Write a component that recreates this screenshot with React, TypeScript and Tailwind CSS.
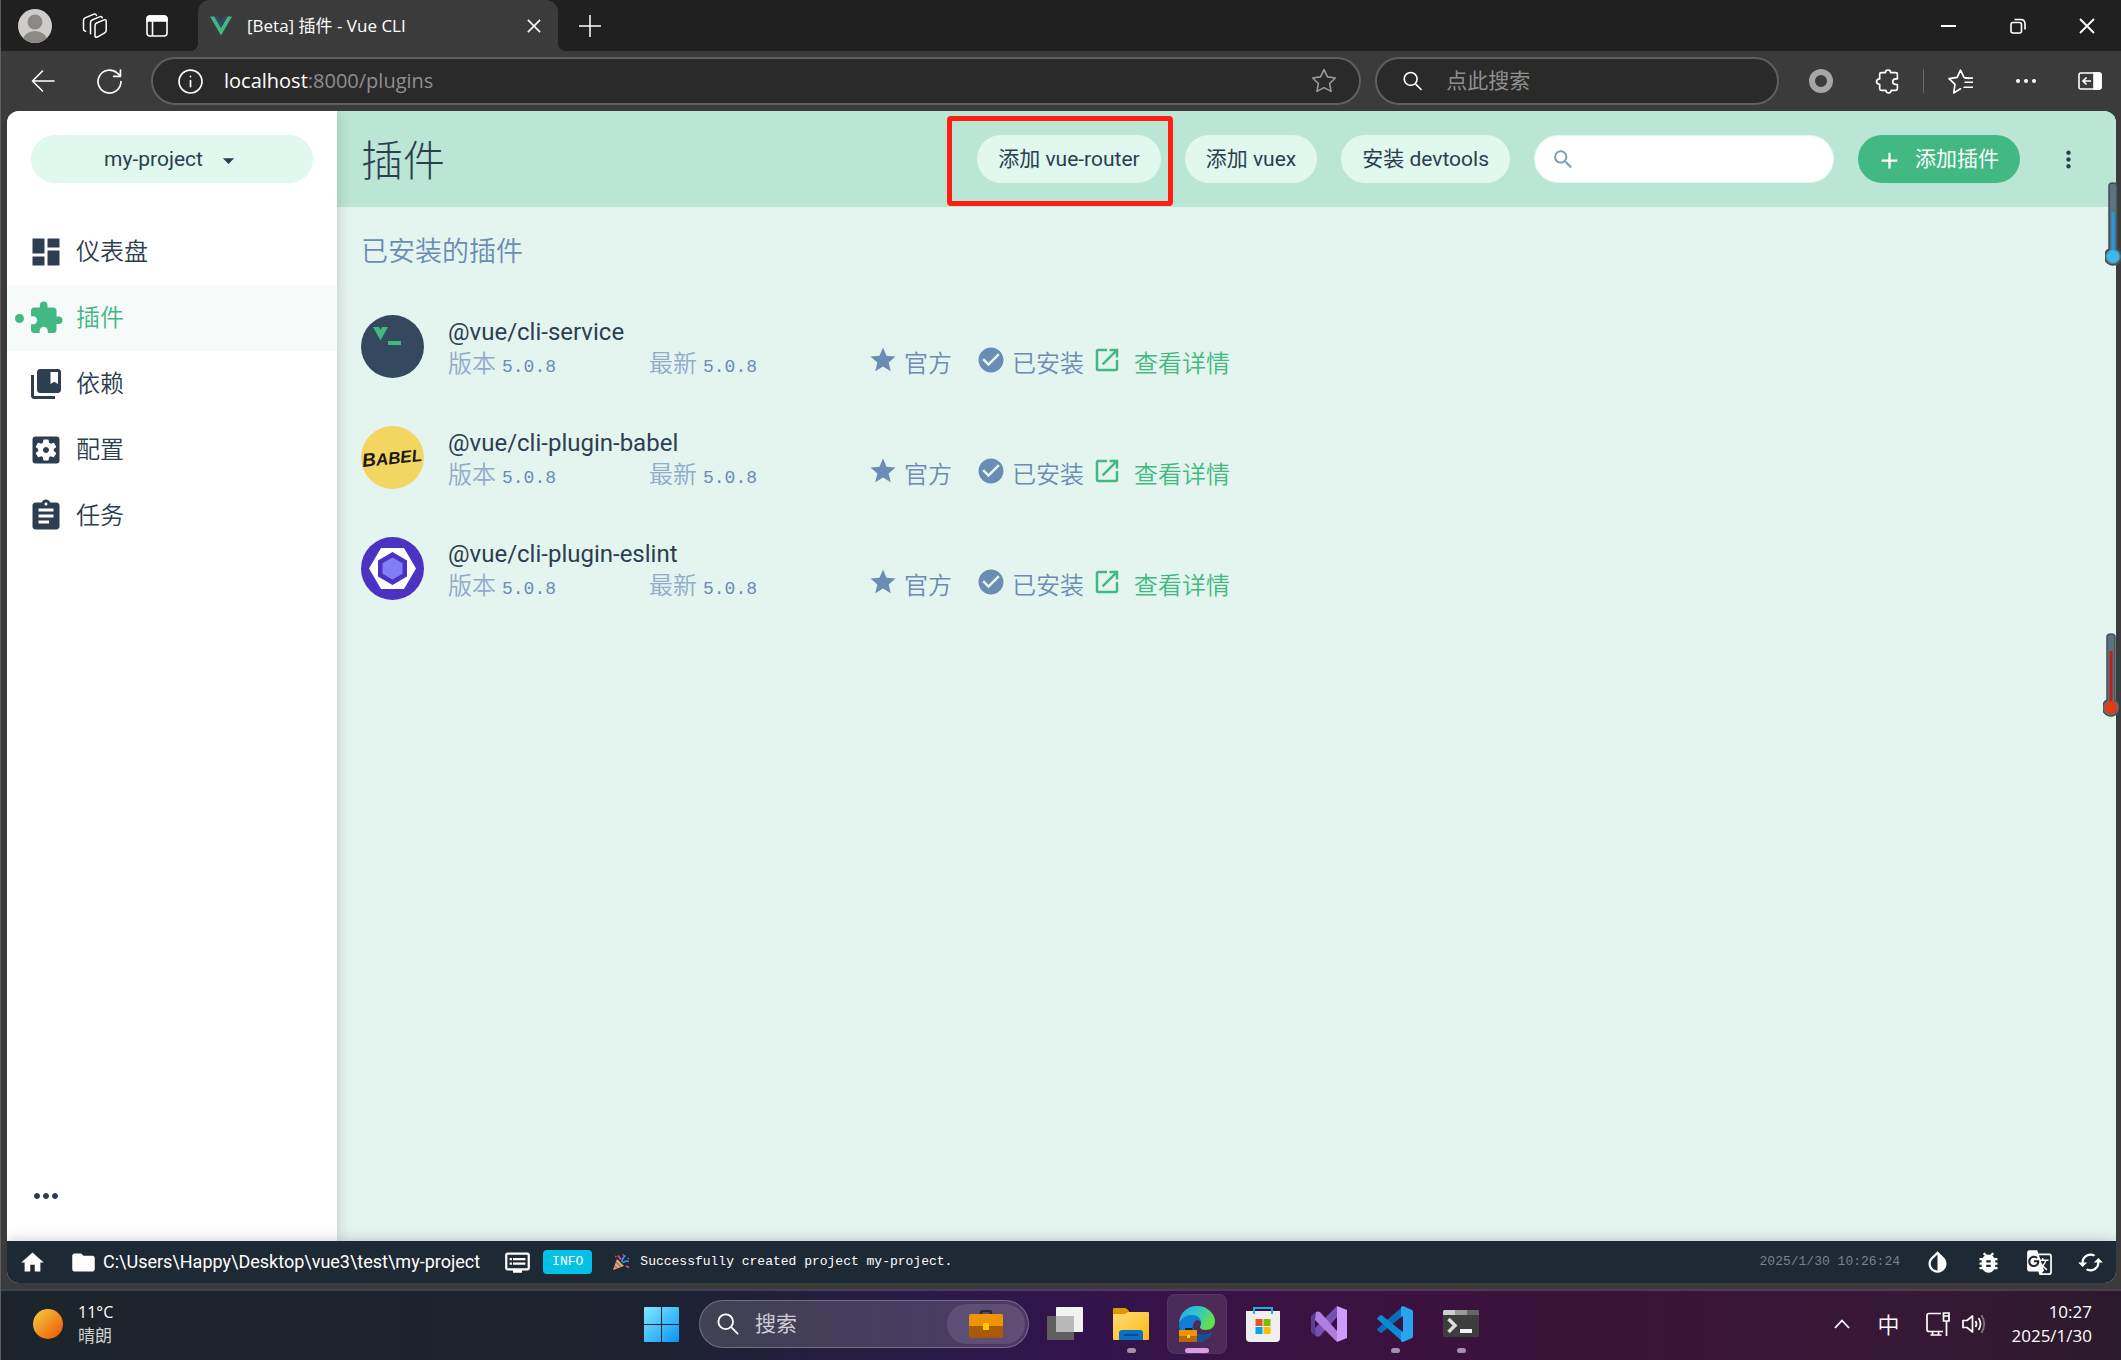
import type { ReactNode } from "react";
import {
  MdAdd,
  MdArrowDropDown,
  MdAssignment,
  MdBugReport,
  MdCached,
  MdCheckCircle,
  MdCollectionsBookmark,
  MdDashboard,
  MdDvr,
  MdExtension,
  MdFolder,
  MdGTranslate,
  MdHome,
  MdInvertColors,
  MdMoreHoriz,
  MdMoreVert,
  MdOpenInNew,
  MdSearch,
  MdSettingsApplications,
  MdStar,
} from "react-icons/md";

const navItems = [
  { label: "仪表盘", icon: MdDashboard, active: false },
  { label: "插件", icon: MdExtension, active: true },
  { label: "依赖", icon: MdCollectionsBookmark, active: false },
  { label: "配置", icon: MdSettingsApplications, active: false },
  { label: "任务", icon: MdAssignment, active: false },
];

const plugins = [
  { name: "@vue/cli-service", version: "5.0.8", latest: "5.0.8", logo: <CliLogo /> },
  { name: "@vue/cli-plugin-babel", version: "5.0.8", latest: "5.0.8", logo: <BabelLogo /> },
  { name: "@vue/cli-plugin-eslint", version: "5.0.8", latest: "5.0.8", logo: <EslintLogo /> },
];

function CliLogo() {
  return (
    <svg viewBox="0 0 63 63" className="size-[63px] shrink-0">
      <circle cx="31.5" cy="31.5" r="31.5" fill="#35495e" />
      <path d="M12 12h6l1.500 3 1.500-3h6l-7.500 13.500z" fill="#41b883" />
      <path d="M27 26h13v4H27z" fill="#41b883" />
    </svg>
  );
}

function BabelLogo() {
  return (
    <svg viewBox="0 0 63 63" className="size-[63px] shrink-0">
      <circle cx="31.5" cy="31.500" r="31.5" fill="#f3d662" />
      <text
        x="31"
        y="38"
        textAnchor="middle"
        transform="rotate(-6 31 32)"
        className="fill-[#1b1a14] font-['Liberation_Sans',sans-serif] text-[19px] font-bold italic"
      >
        B<tspan fontSize="17">ABEL</tspan>
      </text>
    </svg>
  );
}

function EslintLogo() {
  return (
    <svg viewBox="0 0 63 63" className="size-[63px] shrink-0">
      <circle cx="31.5" cy="31.5" r="31.5" fill="#4b32c3" />
      <path d="M20 11h23l12 20.500L43 52H20L8 31.500z" fill="#fff" />
      <path d="M31.500 15l14.500 8.500v16L31.500 48 17 39.500v-16z" fill="#4b32c3" />
      <path d="M31.500 20.500l10 5.800v10.400l-10 5.800-10-5.800V26.300z" fill="#8080f2" />
    </svg>
  );
}

function VueLogo() {
  return (
    <svg viewBox="0 0 24 21" className="h-5 w-[22px]">
      <path d="M0 0h4.800L12 12.500 19.200 0H24L12 20.800z" fill="#41b883" />
      <path d="M4.800 0h4.400L12 4.900 14.800 0h4.400L12 12.500z" fill="#35495e" />
    </svg>
  );
}

function CloseIcon({ size = 16 }: { size?: number }) {
  return (
    <svg viewBox="0 0 16 16" width={size} height={size} fill="none" stroke="currentColor" strokeWidth="1.8">
      <path d="M1 1l14 14M15 1L1 15" />
    </svg>
  );
}

function SearchGlyph({ className }: { className: string }) {
  return (
    <svg viewBox="0 0 24 24" className={className} fill="none" stroke="currentColor" strokeWidth="2">
      <circle cx="9.500" cy="9.500" r="8" />
      <path d="M15.500 15.500l7 7" strokeLinecap="round" />
    </svg>
  );
}

function BriefcaseIcon({ className }: { className: string }) {
  return (
    <svg viewBox="0 0 34 28" className={className}>
      <path d="M12 5V3q0-2 2-2h6q2 0 2 2v2" fill="none" stroke="#2a2a2a" strokeWidth="2.500" />
      <rect y="4" width="34" height="24" rx="1.500" fill="#a85a06" />
      <path d="M0 5.500Q0 4 1.500 4h31Q34 4 34 5.500V16H0z" fill="#ee9208" />
      <rect x="14" y="13" width="6" height="7" fill="#ffc90a" />
    </svg>
  );
}

function TitleBar() {
  return (
    <div className="flex h-[51px] items-stretch bg-[#202020] pl-1 text-white">
      <button aria-label="个人资料" className="flex w-[60px] items-center justify-center">
        <svg viewBox="0 0 34 34" className="size-[34px]">
          <clipPath id="avatar">
            <circle cx="17" cy="17" r="17" />
          </clipPath>
          <g clipPath="url(#avatar)">
            <rect width="34" height="34" fill="#cfcdca" />
            <circle cx="17" cy="13" r="7.500" fill="#8c8885" />
            <ellipse cx="17" cy="31" rx="12" ry="9" fill="#8c8885" />
          </g>
        </svg>
      </button>
      <button aria-label="工作区" className="flex w-[60px] items-center justify-center">
        <svg viewBox="0 0 26 26" className="size-[26px]" fill="none" stroke="currentColor" strokeWidth="1.500" strokeLinejoin="round" strokeLinecap="round">
          <path d="M13 12.500q0-1.800 1.600-2.500l7.400-3.100q2.200-.6 2.200 1.400v9.200q0 1.600-1.500 2.300l-7 4q-2.700 1.300-2.700-1z" />
          <path d="M8.500 20.800V9.500q0-1.800 1.600-2.500L18 3.600q1.700-.5 2.300 1.200" />
          <path d="M3.500 18.300q-2-.5-2-2.300V7.500q0-1.800 1.600-2.600L12 1.100q1.700-.5 2.500 1.200" />
        </svg>
      </button>
      <button aria-label="标签页操作" className="flex w-16 items-center justify-center">
        <svg viewBox="0 0 22 22" className="size-[22px]" fill="none" stroke="currentColor" strokeWidth="1.600">
          <rect x="1" y="1" width="20" height="20" rx="3" />
          <path d="M1 6V4q0-3 3-3h14q3 0 3 3v2z" fill="currentColor" />
          <path d="M6.500 6v15" />
        </svg>
      </button>
      <div className="relative ml-[9px] flex w-[360px] items-center rounded-t-xl bg-[#3b3b3b] pl-3 pr-[17px]">
        <span className="absolute -left-2 bottom-0 size-2 bg-[radial-gradient(circle_at_0_0,#202020_8px,#3b3b3b_8px)]" />
        <span className="absolute -right-2 bottom-0 size-2 bg-[radial-gradient(circle_at_100%_0,#202020_8px,#3b3b3b_8px)]" />
        <VueLogo />
        <span className="ml-[15px] flex-1 text-[17px]">[Beta] 插件 - Vue CLI</span>
        <button aria-label="关闭标签页">
          <CloseIcon size={14} />
        </button>
      </div>
      <button aria-label="新建标签页" className="ml-[21px] flex items-center">
        <svg viewBox="0 0 22 22" className="size-[22px]" stroke="currentColor" strokeWidth="1.500">
          <path d="M11 0v22M0 11h22" />
        </svg>
      </button>
      <div className="ml-auto flex">
        <button aria-label="最小化" className="flex w-[69px] items-center justify-center">
          <span className="h-0.5 w-[15px] bg-white" />
        </button>
        <button aria-label="还原" className="flex w-[69px] items-center justify-center">
          <svg viewBox="0 0 16 16" className="size-4" fill="none" stroke="currentColor" strokeWidth="1.600">
            <rect x="1" y="4.500" width="10.500" height="10.500" rx="2" />
            <path d="M4.500 1.500h6q4.500 0 4.500 4.500v5.500" />
          </svg>
        </button>
        <button aria-label="关闭" className="flex w-[69px] items-center justify-center">
          <CloseIcon size={16} />
        </button>
      </div>
    </div>
  );
}

function ToolButton({ label, children }: { label: string; children: ReactNode }) {
  return (
    <button aria-label={label} className="flex h-12 w-[66px] shrink-0 items-center justify-center">
      {children}
    </button>
  );
}

function Toolbar() {
  return (
    <div className="flex h-[60px] items-center bg-[#3b3b3b] pl-[9px] text-white">
      <ToolButton label="后退">
        <svg viewBox="0 0 24 22" className="h-[22px] w-6" fill="none" stroke="currentColor" strokeWidth="1.600" strokeLinecap="round" strokeLinejoin="round">
          <path d="M23 11H1.500M11.500 1l-10 10 10 10" />
        </svg>
      </ToolButton>
      <ToolButton label="刷新">
        <svg viewBox="0 0 24 24" className="size-[25px]" fill="none" stroke="currentColor" strokeWidth="1.600" strokeLinecap="round" strokeLinejoin="round">
          <path d="M23 12A11 11 0 1 1 19.500 4L22.500 6.500" />
          <path d="M22.500 1v6H16" />
        </svg>
      </ToolButton>
      <div className="ml-[9px] flex h-12 flex-1 items-center rounded-full border-2 border-[#5f5f5f] bg-[#2a2a2a] pl-[25px] pr-[22px]">
        <svg viewBox="0 0 24 24" className="size-[25px]" fill="none" stroke="currentColor" strokeWidth="1.600" strokeLinecap="round">
          <circle cx="12" cy="12" r="11" />
          <path d="M12 11v6M12 7v.3" />
        </svg>
        <a href="http://localhost:8000/plugins" className="ml-[21px] flex-1 text-[20px] text-[#8f8f8f]">
          <span className="text-white">localhost</span>:8000/plugins
        </a>
        <button aria-label="收藏" className="text-[#9a9a9a]">
          <svg viewBox="0 0 24 24" className="size-[26px]" fill="none" stroke="currentColor" strokeWidth="1.500" strokeLinejoin="round">
            <path d="M12 1.500l3.200 6.700 7.300 1-5.300 5.100 1.300 7.300L12 18.100l-6.500 3.500 1.300-7.300L1.500 9.200l7.300-1z" />
          </svg>
        </button>
      </div>
      <label className="ml-3.5 flex h-12 w-[404px] items-center rounded-full border-2 border-[#5f5f5f] bg-[#2a2a2a] pl-[26px] pr-5">
        <SearchGlyph className="size-[22px]" />
        <input placeholder="点此搜索" aria-label="点此搜索" className="ml-6 w-full bg-transparent text-[21px] outline-none placeholder:text-[#8f8f8f]" />
      </label>
      <div className="ml-[9px] flex items-center">
        <ToolButton label="扩展程序">
          <span className="size-6 rounded-full border-[6px] border-[#a6a6a6]" />
        </ToolButton>
        <ToolButton label="扩展">
          <svg viewBox="0 0 24 24" className="size-[25px]" fill="none" stroke="currentColor" strokeWidth="1.600" strokeLinejoin="round">
            <path d="M6 3.500h4c0-3.400 5-3.400 5 0h5q1.500 0 1.500 1.500v4.500h-1.500q-3 .3-3 2.700t3 2.700h1.500V19q0 1.500-1.500 1.500h-4.500c0 3.400-5 3.400-5 0H6q-1.500 0-1.500-1.500v-4.300c-4 0-4-5.200 0-5.200V5Q4.500 3.500 6 3.500z" />
          </svg>
        </ToolButton>
        <span className="mx-[3px] h-6 w-px bg-[#6a6a6a]" />
        <ToolButton label="收藏夹">
          <svg viewBox="0 0 24 24" className="size-[25px]" fill="none" stroke="currentColor" strokeWidth="1.600" strokeLinejoin="round" strokeLinecap="round">
            <path d="M20 9l-4.500-.8L12 1 8.800 8 1 9.300l5.700 5.400L5.500 23l6.500-4" />
            <path d="M16.500 12.700H23.500M16.500 8.700H23.500M15.500 17.500h8" />
          </svg>
        </ToolButton>
        <ToolButton label="设置及其他">
          <svg viewBox="0 0 22 6" className="h-1.5 w-[22px]" fill="currentColor">
            <circle cx="3" cy="3" r="2" />
            <circle cx="11" cy="3" r="2" />
            <circle cx="19" cy="3" r="2" />
          </svg>
        </ToolButton>
        <button aria-label="侧边栏" className="flex w-[62px] items-center justify-center">
          <svg viewBox="0 0 24 18" className="h-[18px] w-6" fill="none" stroke="currentColor" strokeWidth="1.600">
            <rect x="1" y="1" width="22" height="16" rx="2" />
            <path d="M16 1h5q2 0 2 2v12q0 2-2 2h-5z" fill="currentColor" />
            <path d="M13 9H5M8.500 5.500L5 9l3.500 3.500" />
          </svg>
        </button>
      </div>
    </div>
  );
}

function Sidebar() {
  return (
    <aside className="z-10 flex w-[330px] shrink-0 flex-col bg-white shadow-[0_0_14px_rgba(0,0,0,0.18)]">
      <button className="m-6 flex h-12 items-center justify-center gap-3 rounded-full bg-[#e0f8ed] pl-0.5 pt-0.5 text-[21px] text-[#2c3e50]">
        my-project
        <MdArrowDropDown size={27} />
      </button>
      <nav className="mt-3">
        {navItems.map(({ label, icon: Icon, active }) => (
          <a
            key={label}
            href="#"
            className={
              active
                ? "relative flex h-[66px] items-center gap-3 bg-[#f6fbf9] pl-[21px] text-2xl text-[#42b983]"
                : "relative flex h-[66px] items-center gap-3 pl-[21px] text-2xl text-[#2c3e50]"
            }
          >
            {active && <span className="absolute left-2 size-[9px] rounded-full bg-[#42b983]" />}
            <Icon size={36} />
            <span className="font-[350]">{label}</span>
          </a>
        ))}
      </nav>
      <button aria-label="更多" className="mb-[27px] ml-[21px] mt-auto self-start text-[#2c3e50]">
        <MdMoreHoriz size={36} />
      </button>
    </aside>
  );
}

const pillClass = "h-12 rounded-full bg-[#e0f8ed] px-[21px] pt-0.5 text-[21px] text-[#2c3e50]";

function Header() {
  return (
    <header className="flex h-24 items-center gap-6 bg-[#bbe6d6] px-6">
      <h1 className="flex-1 pt-1 text-[42px] font-light text-[#2c3e50]">插件</h1>
      <div className="relative">
        <button className={pillClass}>添加 vue-router</button>
        <span className="pointer-events-none absolute -bottom-[23px] -left-[30px] -right-3 -top-[19px] rounded border-[5px] border-[#ff1e12]" />
      </div>
      <button className={pillClass}>添加 vuex</button>
      <button className={pillClass}>安装 devtools</button>
      <label className="flex h-12 w-[300px] items-center rounded-full border border-[#e0f8ed] bg-white pl-4 text-[#7d9fb5]">
        <MdSearch size={27} />
        <input aria-label="搜索插件" className="w-full bg-transparent px-2 text-[21px] outline-none" />
      </label>
      <button className="flex h-12 items-center gap-3 rounded-full bg-[#42b983] pl-[18px] pr-[21px] pt-0.5 text-[21px] text-white">
        <MdAdd size={27} />
        添加插件
      </button>
      <button aria-label="更多选项" className="flex size-12 items-center justify-center text-[#2c3e50]">
        <MdMoreVert size={27} />
      </button>
    </header>
  );
}

function PluginList() {
  return (
    <section className="p-6">
      <h2 className="text-[27px] font-[350] leading-[42px] text-[#6b8cb4]">已安装的插件</h2>
      <ul className="mt-[42px] space-y-12">
        {plugins.map((plugin) => (
          <li key={plugin.name} className="flex h-[63px] gap-6">
            {plugin.logo}
            <div>
              <div className="text-2xl leading-[34px] text-[#2c3e50]">{plugin.name}</div>
              <div className="flex text-2xl font-[350] leading-[30px] text-[#6b8cb4]">
                <span className="w-[201px]">
                  <span className="text-[#92abca]">版本</span>
                  <span className="ml-1.5 font-['Liberation_Mono',monospace] text-lg leading-none">{plugin.version}</span>
                </span>
                <span className="w-[219px]">
                  <span className="text-[#92abca]">最新</span>
                  <span className="ml-1.5 font-['Liberation_Mono',monospace] text-lg leading-none">{plugin.latest}</span>
                </span>
                <span className="flex gap-1.5">
                  <MdStar size={30} className="-mt-1" />
                  官方
                </span>
                <span className="ml-6 flex gap-1.5">
                  <MdCheckCircle size={30} className="-mt-1" />
                  已安装
                </span>
                <a href="#" className="ml-2 flex gap-3 text-[#42b983]">
                  <MdOpenInNew size={30} className="-mt-1" />
                  查看详情
                </a>
              </div>
            </div>
          </li>
        ))}
      </ul>
    </section>
  );
}

function StatusBar() {
  return (
    <footer className="z-20 flex h-[42px] items-center bg-[#1d2935] text-white shadow-[0_0_14px_rgba(0,0,0,0.22)]">
      <button aria-label="主页" className="w-[51px] pl-3">
        <MdHome size={27} />
      </button>
      <button className="flex items-center gap-1.5 pl-3 text-lg">
        <MdFolder size={27} />
        C:\Users\Happy\Desktop\vue3\test\my-project
      </button>
      <button className="ml-6 flex flex-1 items-center font-['Liberation_Mono',monospace] text-[13px]">
        <MdDvr size={27} />
        <span className="ml-3 rounded bg-[#03c2e6] px-[9px] leading-6">INFO</span>
        <PartyIcon />
        Successfully created project my-project.
      </button>
      <span className="mr-3 font-['Liberation_Mono',monospace] text-[13px] text-[#77838c]">2025/1/30 10:26:24</span>
      <StatusButton label="切换暗色">
        <MdInvertColors size={27} />
      </StatusButton>
      <StatusButton label="报告问题">
        <MdBugReport size={27} />
      </StatusButton>
      <StatusButton label="翻译">
        <MdGTranslate size={27} />
      </StatusButton>
      <StatusButton label="重置">
        <MdCached size={27} />
      </StatusButton>
    </footer>
  );
}

function StatusButton({ label, children }: { label: string; children: ReactNode }) {
  return (
    <button aria-label={label} className="flex w-[51px] items-center justify-center">
      {children}
    </button>
  );
}

function PartyIcon() {
  return (
    <svg viewBox="0 0 17 17" className="ml-[21px] mr-2.5 size-[17px]">
      <path d="M0 16L4 5l7 7z" fill="#f2b13c" />
      <path d="M3 8l5 5M1.500 12l3 2.500" stroke="#a35bd6" strokeWidth="1.500" />
      <path d="M5 1.500l3 4M13 12l3 1.500" stroke="#e8467c" strokeWidth="1.800" />
      <path d="M9 8q0-4 3.500-6.500M10 9q2-2.500 6-1.500" stroke="#1f9be8" strokeWidth="1.800" fill="none" />
      <path d="M9.500 1h1.500M14.500 4.500H16M2 2.500h1.500" stroke="#e8467c" strokeWidth="1.500" />
    </svg>
  );
}

type ThermometerProps = { column: string; bulb: string; start: number; className: string };

function Thermometer({ column, bulb, start, className }: ThermometerProps) {
  return (
    <svg viewBox="0 0 16 84" className={className}>
      <path d="M4 67V4q0-3 4-3t4 3v63a8.500 8.500 0 1 1-8 0z" fill="#5d727c" stroke="#3e4f58" strokeWidth="1.500" />
      <rect x="6.500" y={start} width="3" height={71 - start} fill={column} />
      <circle cx="8" cy="74.500" r="6.500" fill={bulb} />
    </svg>
  );
}

const taskbarApps = [
  { name: "任务视图", icon: <TaskViewIcon />, state: "none" },
  { name: "文件资源管理器", icon: <ExplorerIcon />, state: "open" },
  { name: "Microsoft Edge", icon: <EdgeIcon />, state: "active" },
  { name: "Microsoft Store", icon: <StoreIcon />, state: "none" },
  { name: "Visual Studio", icon: <VisualStudioIcon />, state: "none" },
  { name: "Visual Studio Code", icon: <VsCodeIcon />, state: "open" },
  { name: "终端", icon: <TerminalIcon />, state: "open" },
];

function TaskViewIcon() {
  return (
    <svg viewBox="0 0 36 36" className="size-9">
      <rect x="9" y="1" width="27" height="25" rx="1" fill="#f2f2f2" />
      <rect y="10" width="27" height="24" rx="1" fill="#5f5f5f" />
      <rect x="9" y="10" width="18" height="16" fill="#b9b9b9" />
    </svg>
  );
}

function ExplorerIcon() {
  return (
    <svg viewBox="0 0 36 36" className="size-9">
      <defs>
        <linearGradient id="folder" x1="0" y1="0" x2="1" y2="1">
          <stop offset="0" stopColor="#ffdd75" />
          <stop offset="1" stopColor="#fdb913" />
        </linearGradient>
      </defs>
      <path d="M0 3q0-1 1-1h11q1 0 2 1l2 2v7H0z" fill="#dd9a00" />
      <path d="M0 8h11q2 0 4-2h20q1 0 1 1v26q0 1-1 1H1q-1 0-1-1z" fill="url(#folder)" />
      <path d="M6 34V27q0-3 3-3h18q3 0 3 3v7z" fill="#0b6fc4" />
      <path d="M11 29h14" stroke="#0a4a8a" strokeWidth="2" />
    </svg>
  );
}

function EdgeIcon() {
  return (
    <svg viewBox="0 0 36 36" className="size-9">
      <defs>
        <linearGradient id="edge-top" x1="0" y1="0" x2="1" y2="0.4">
          <stop offset="0" stopColor="#2aa7e8" />
          <stop offset="0.5" stopColor="#30c6cf" />
          <stop offset="1" stopColor="#62e04f" />
        </linearGradient>
      </defs>
      <path d="M0 17C1 6 9 0 18 0c11 0 18 8 18 15 0 6-4 9-9 9-4 0-6-1-6-3 0-1 1-1 1-4 0-3-3-5-7-5C9 10 3 12 0 17z" fill="url(#edge-top)" />
      <path d="M0 18c2-6 7-9 13-9 5 0 9 3 9 7-2-3-8-2-8 4 0 9 9 11 19 7-4 6-9 9-15 9C8 36 0 28 0 18z" fill="#0f7fd4" />
      <path d="M14 20c0 9 9 11 19 7-4 6-9 9-15 9-5-3-7-10-4-16z" fill="#12509c" />
      <path d="M0 24h18v12H0z" fill="#b86a08" />
      <path d="M0 24h18v6H0z" fill="#ee9208" />
      <path d="M8 29h3v3H8z" fill="#ffd21a" />
      <path d="M6 23h7" stroke="#222" strokeWidth="2" />
    </svg>
  );
}

function StoreIcon() {
  return (
    <svg viewBox="0 0 36 36" className="size-9">
      <path d="M1 5h34v27q0 4-4 4H5q-4 0-4-4z" fill="#efefef" />
      <path d="M9 8V2h18v6" fill="none" stroke="#2aa9ea" strokeWidth="2" />
      <path d="M10.500 13h7v7h-7z" fill="#f25022" />
      <path d="M18.500 13h7v7h-7z" fill="#7fba00" />
      <path d="M10.500 21h7v7h-7z" fill="#00a4ef" />
      <path d="M18.500 21h7v7h-7z" fill="#ffb900" />
    </svg>
  );
}

function VisualStudioIcon() {
  return (
    <svg viewBox="0 0 36 36" className="size-9">
      <path d="M0 10l5-4v7l-1 1v8l1 1v7l-5-4z" fill="#5d3c93" />
      <path d="M26 0v11L9 30q-2 1-4 0l-1-8z" fill="#7750b5" />
      <path d="M5 6q2-1 4 0l17 19v11L4 14z" fill="#b07ee0" />
      <path d="M26 0l10 4v28l-10 4z" fill="#cf9bfb" />
    </svg>
  );
}

function VsCodeIcon() {
  return (
    <svg viewBox="0 0 36 36" className="size-9">
      <path d="M26 0v10L5 26.500q-1 .8-2 0L.600 24.500q-1-1 0-2z" fill="#0a6fb8" />
      <path d="M.600 11.500L3 9.500q1-.8 2 0L26 26v10L.600 13.500q-1-1 0-2z" fill="#0b8bd6" />
      <path d="M26 0l9 4q1 .5 1 1.500v25q0 1-1 1.500l-9 4q-2 0-2-1V1z" fill="#2aa4f2" />
      <path d="M26 10v16l-10-8z" fill="#3a1240" />
    </svg>
  );
}

function TerminalIcon() {
  return (
    <svg viewBox="0 0 36 36" className="size-9">
      <rect y="4" width="36" height="27" rx="1.500" fill="#3d3d3d" />
      <path d="M0 9V5.500Q0 4 1.500 4H12v5z" fill="#cfcfcf" />
      <path d="M12 4h12v5H12z" fill="#9a9a9a" />
      <path d="M24 4h10.500Q36 4 36 5.500V9H24z" fill="#666" />
      <path d="M5.500 13l6.500 6.500L5.500 26" fill="none" stroke="#dcdcdc" strokeWidth="3.500" />
      <path d="M17 23h12v4H17z" fill="#f4f4f4" />
    </svg>
  );
}

function Taskbar() {
  return (
    <div className="flex h-[71px] items-center border-t-2 border-white/15 bg-[linear-gradient(90deg,#1c242b_0%,#1c222f_30%,#2a1b48_44%,#33134c_51%,#3b1243_60%,#3b1238_75%,#371836_90%,#2b1a2b_100%)] bg-origin-border pb-[3px] text-white">
      <button className="flex flex-1 items-center gap-[15px] pl-8 text-left">
        <svg viewBox="0 0 30 30" className="size-[30px]">
          <linearGradient id="sun" x1="0" y1="0" x2="1" y2="1">
            <stop offset="0.100" stopColor="#f3c53a" />
            <stop offset="0.800" stopColor="#f26a10" />
          </linearGradient>
          <circle cx="15" cy="15" r="15" fill="url(#sun)" />
        </svg>
        <span className="flex flex-col leading-6">
          <span className="text-base leading-6">11°C</span>
          <span className="text-[17px] text-[#d0d0d0]">晴朗</span>
        </span>
      </button>
      <div className="ml-2.5 flex items-center">
        <button aria-label="开始" className="mr-5">
          <svg viewBox="0 0 35 35" className="size-[35px]">
            <linearGradient id="start" x1="0" y1="0" x2="1" y2="1">
              <stop offset="0" stopColor="#7deaff" />
              <stop offset="1" stopColor="#0a93f5" />
            </linearGradient>
            <path d="M0 1q0-1 1-1h16v17H0zM18 0h16q1 0 1 1v16H18zM0 18h17v17H1q-1 0-1-1zM18 18h17v16q0 1-1 1H18z" fill="url(#start)" />
          </svg>
        </button>
        <label className="flex h-12 w-[330px] items-center rounded-full border border-white/25 bg-white/15 pl-[17px] pr-[3px]">
          <SearchGlyph className="size-[22px] shrink-0" />
          <input placeholder="搜索" aria-label="搜索" className="mx-4 w-full min-w-0 bg-transparent text-[21px] outline-none placeholder:text-[#d0cdd6]" />
          <span className="flex h-10 w-[78px] shrink-0 items-center justify-center rounded-full bg-white/10">
            <BriefcaseIcon className="h-7 w-[34px]" />
          </span>
        </label>
        <div className="ml-1.5 flex gap-1.5">
          {taskbarApps.map((app) => (
            <button
              key={app.name}
              aria-label={app.name}
              className={
                app.state === "active"
                  ? "relative flex size-[60px] items-center justify-center rounded-lg border border-white/5 bg-white/10"
                  : "relative flex size-[60px] items-center justify-center"
              }
            >
              {app.icon}
              {app.state === "open" && <span className="absolute bottom-px h-[5px] w-[9px] rounded-full bg-[#a68fa8]" />}
              {app.state === "active" && <span className="absolute bottom-0 h-[5px] w-6 rounded-full bg-[#dc9ce4]" />}
            </button>
          ))}
        </div>
      </div>
      <div className="flex flex-1 items-center justify-end pr-[29px]">
        <button aria-label="显示隐藏的图标">
          <svg viewBox="0 0 16 10" className="h-2.5 w-4" fill="none" stroke="currentColor" strokeWidth="1.800">
            <path d="M1 9l7-7.500L15 9" />
          </svg>
        </button>
        <button className="ml-[27px] text-[22px] font-[350]">中</button>
        <button aria-label="网络和音量" className="ml-[27px] flex gap-3">
          <svg viewBox="0 0 24 24" className="size-6" fill="none" stroke="currentColor" strokeWidth="1.700">
            <path d="M15 1.500H3q-2 0-2 2v14q0 2 2 2h14M6.500 19.500V23M12.500 19.500V23M4.500 23h11" />
            <path d="M17.500 1h5.500v8h-5.500zM17.500 4h5.500M20.500 9v15" />
          </svg>
          <svg viewBox="0 0 24 24" className="size-6" fill="none" stroke="currentColor" strokeWidth="1.700" strokeLinejoin="round">
            <path d="M1 8.500h4L10.500 4v16L5 15.500H1z" />
            <path d="M13.500 9q2 3 0 6M16.500 6q4 6 0 12" />
            <path d="M19.500 3q5.500 9 0 18" className="opacity-40" />
          </svg>
        </button>
        <button className="ml-[25px] flex flex-col items-end text-[17px] leading-6">
          <span>10:27</span>
          <span>2025/1/30</span>
        </button>
      </div>
    </div>
  );
}

export default function App() {
  return (
    <div className="flex min-h-screen flex-col border-l border-[#5e5e5e] bg-[#3b3b3b] font-['Open_Sans','Noto_Sans_CJK_SC',sans-serif]">
      <TitleBar />
      <Toolbar />
      <div className="relative flex flex-1 flex-col pb-1.5 pl-1.5 pr-[5px]">
        <div className="flex flex-1 flex-col overflow-hidden rounded-xl bg-[#e4f5ef] font-['Roboto','Noto_Sans_CJK_SC',sans-serif]">
          <div className="flex flex-1">
            <Sidebar />
            <main className="flex-1">
              <Header />
              <PluginList />
            </main>
          </div>
          <StatusBar />
        </div>
        <Thermometer column="#1f9be0" bulb="#3bb9ea" start={30} className="absolute right-0 top-[71px] h-[84px] w-4" />
        <Thermometer column="#c02018" bulb="#e23a14" start={18} className="absolute right-0.5 top-[522px] h-[84px] w-4" />
      </div>
      <Taskbar />
    </div>
  );
}
